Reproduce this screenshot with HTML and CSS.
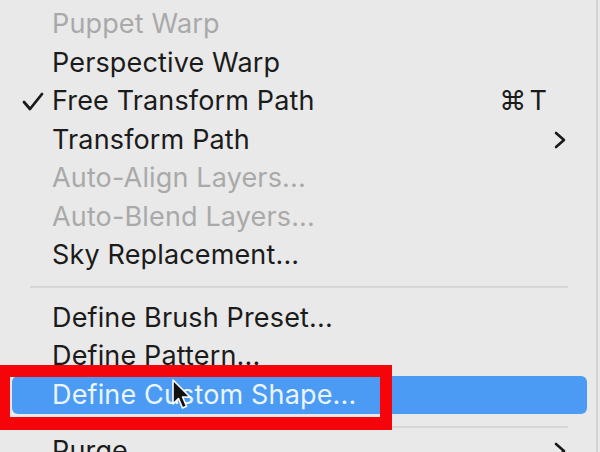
FILE: index.html
```html
<!DOCTYPE html>
<html>
<head>
<meta charset="utf-8">
<link rel="stylesheet" href="styles.css">
</head>
<body>
<div class="menu">
  <div class="item disabled"><span class="check"></span><span class="label">Puppet Warp</span></div>
  <div class="item"><span class="check"></span><span class="label">Perspective Warp</span></div>
  <div class="item"><span class="check"><svg width="22" height="19" viewBox="0 0 22 19"><path d="M2 10 L8 17 L20 2" fill="none" stroke="#1a1a1a" stroke-width="2.8" stroke-linecap="round" stroke-linejoin="round"/></svg></span><span class="label">Free Transform Path</span><span class="shortcut"><span>⌘</span><span>T</span></span></div>
  <div class="item"><span class="check"></span><span class="label">Transform Path</span><span class="chev"><svg width="14" height="18" viewBox="0 0 14 18"><path d="M3 2 L11 9 L3 16" fill="none" stroke="#1a1a1a" stroke-width="2.6" stroke-linecap="round" stroke-linejoin="round"/></svg></span></div>
  <div class="item disabled"><span class="check"></span><span class="label">Auto-Align Layers...</span></div>
  <div class="item disabled"><span class="check"></span><span class="label">Auto-Blend Layers...</span></div>
  <div class="item"><span class="check"></span><span class="label">Sky Replacement...</span></div>
  <div class="sep"></div>
  <div class="item"><span class="check"></span><span class="label">Define Brush Preset...</span></div>
  <div class="item"><span class="check"></span><span class="label">Define Pattern...</span></div>
  <div class="item active"><span class="check"></span><span class="label">Define Custom Shape...</span></div>
  <div class="sep sep2"></div>
  <div class="item"><span class="check"></span><span class="label">Purge</span><span class="chev"><svg width="14" height="18" viewBox="0 0 14 18"><path d="M3 2 L11 9 L3 16" fill="none" stroke="#1a1a1a" stroke-width="2.6" stroke-linecap="round" stroke-linejoin="round"/></svg></span></div>
</div>
<div class="annot"></div>
<svg class="cursor" width="22" height="34" viewBox="0 0 22 34"><path d="M2 1 L2 25 L7.5 19.5 L11.5 29 L15.5 27.3 L11.6 18 L19 18 Z" fill="#111" stroke="#fff" stroke-width="1.6" stroke-linejoin="round"/></svg>
</body>
</html>
```
FILE: styles.css
```css
html, body {
  margin: 0;
  padding: 0;
  background: #e9e9e9;
  width: 600px;
  height: 452px;
  overflow: hidden;
}
body {
  position: relative;
  font-family: Inter, "Liberation Sans", sans-serif;
}
.menu {
  width: 598px;
  height: 452px;
  border-right: 2px solid #d3d3d3;
  box-sizing: border-box;
  padding-top: 5px;
  display: flex;
  flex-direction: column;
}
.item {
  flex: none;
  height: 38.5px;
  margin: 0 9px 0 12px;
  display: flex;
  align-items: center;
  font-size: 27px;
  letter-spacing: 0.15px;
  line-height: 38.5px;
  color: #1b1b1b;
  border-radius: 6px;
}
.item.disabled { color: #a9a9a9; }
.check {
  width: 40px;
  flex: none;
  display: flex;
  align-items: center;
  padding-left: 10px;
  box-sizing: border-box;
}
.check svg { display: block; }
.label { flex: 1; white-space: nowrap; }
.shortcut {
  display: flex;
  gap: 3px;
  margin-right: 40px;
}
.chev {
  display: flex;
  margin-right: 20px;
}
.chev svg { display: block; }
.sep {
  flex: none;
  height: 2px;
  background: #d6d6d6;
  margin: 11px 28px 11px 30px;
}
.sep2 { margin: 12px 28px 4px 30px; }
.item.active {
  background: #4b9bf5;
  color: #eaf5ff;
}
.annot {
  position: absolute;
  left: -2px;
  top: 365px;
  width: 394px;
  height: 65px;
  box-sizing: border-box;
  border: 12px solid #f5050a;
  border-bottom-width: 13px;
}
.cursor {
  position: absolute;
  left: 171px;
  top: 379px;
}
```
